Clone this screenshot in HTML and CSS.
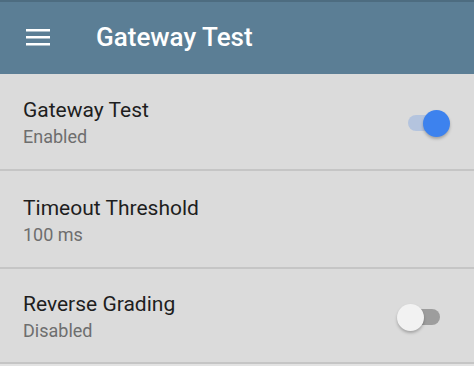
FILE: index.html
```html
<!DOCTYPE html>
<html>
<head>
<meta charset="utf-8">
<link rel="stylesheet" href="styles.css">
</head>
<body>
<div class="app">
  <header class="appbar">
    <svg class="menu" width="24" height="18" viewBox="0 0 24 18">
      <rect x="0" y="0" width="24" height="2.5" fill="#fff"/>
      <rect x="0" y="7" width="24" height="2.5" fill="#fff"/>
      <rect x="0" y="14" width="24" height="2.5" fill="#fff"/>
    </svg>
    <h1 class="title">Gateway Test</h1>
  </header>
  <ul class="list">
    <li class="row r1">
      <div class="text">
        <div class="primary">Gateway Test</div>
        <div class="secondary">Enabled</div>
      </div>
      <div class="switch on"><span class="track"></span><span class="thumb"></span></div>
    </li>
    <li class="row r2">
      <div class="text">
        <div class="primary">Timeout Threshold</div>
        <div class="secondary">100 ms</div>
      </div>
    </li>
    <li class="row r3">
      <div class="text">
        <div class="primary">Reverse Grading</div>
        <div class="secondary">Disabled</div>
      </div>
      <div class="switch off"><span class="track"></span><span class="thumb"></span></div>
    </li>
  </ul>
</div>
</body>
</html>
```
FILE: styles.css
```css
* { box-sizing: border-box; }
html, body { margin: 0; padding: 0; }
body {
  width: 474px;
  height: 366px;
  overflow: hidden;
  background: #e3e3e3;
  font-family: Roboto, "Noto Sans", sans-serif;
}
.app { display: flex; flex-direction: column; }
.appbar {
  height: 74px;
  background: #5b7e95;
  border-top: 2px solid #4d6c80;
  display: flex;
  align-items: center;
  padding-left: 26px;
  padding-bottom: 2px;
}
.menu { display: block; margin-top: 2px; }
.title {
  margin: 0 0 0 46px;
  color: #ffffff;
  font-size: 26px;
  font-weight: 500;
  letter-spacing: 0;
}
.list { list-style: none; margin: 0; padding: 0; }
.row {
  background: #dbdbdb;
  border-bottom: 2px solid #c5c5c5;
  display: flex;
  align-items: center;
  justify-content: space-between;
  padding: 3px 24px 0 23px;
}
.r1 { height: 97px; }
.r2 { height: 98px; }
.r3 { height: 95px; }
.text { display: flex; flex-direction: column; }
.primary {
  font-size: 21px;
  color: #1e1e1e;
  line-height: 28px;
}
.secondary {
  font-size: 18px;
  color: #6e6e6e;
  line-height: 26px;
}
.switch {
  position: relative;
  width: 53px;
  height: 27px;
}
.track {
  position: absolute;
  left: 11px;
  top: 5px;
  width: 32px;
  height: 16px;
  border-radius: 8px;
}
.thumb {
  position: absolute;
  top: 0;
  width: 27px;
  height: 27px;
  border-radius: 50%;
  box-shadow: 0 2px 3px rgba(0,0,0,0.25);
}
.on .track { background: #b4c4de; }
.on .thumb { background: #3d82ee; left: 26px; }
.off .track { background: #9d9d9d; }
.off .thumb { background: #f2f2f2; left: 0; }
```
